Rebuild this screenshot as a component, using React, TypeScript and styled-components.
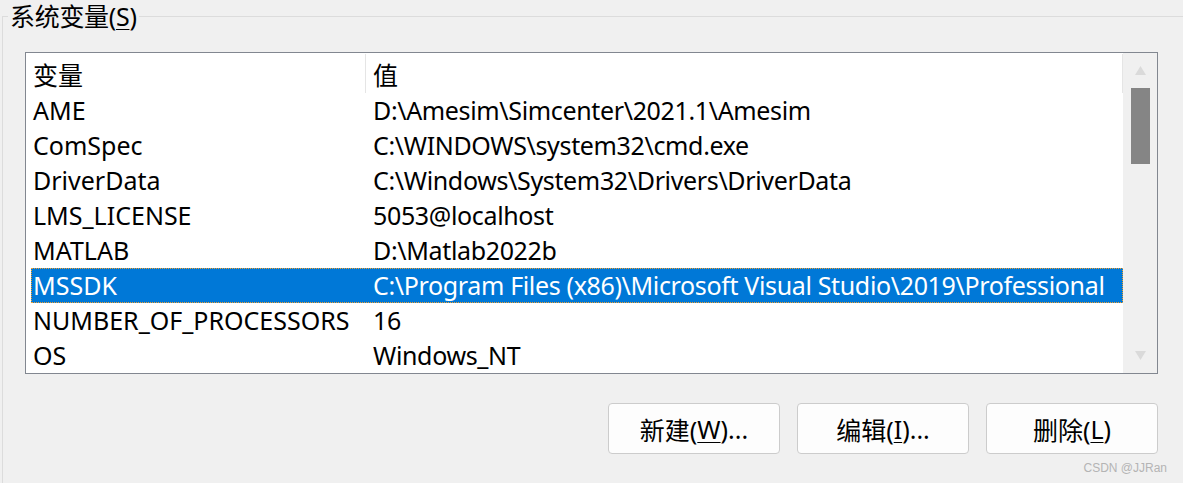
import styled, { createGlobalStyle } from "styled-components";

//global styling
const GlobalStyle = createGlobalStyle`
  html, body {
    margin: 0;
    padding: 0;
    background: #f0f0f0;
  }
  body {
    font-family: "Noto Sans", "Noto Sans CJK SC", sans-serif;
    color: #000;
  }
`;

const FONT = `"Noto Sans", "Noto Sans CJK SC", sans-serif`;

//data
const variables: { name: string; value: string }[] = [
  { name: "AME", value: "D:\\Amesim\\Simcenter\\2021.1\\Amesim" },
  { name: "ComSpec", value: "C:\\WINDOWS\\system32\\cmd.exe" },
  { name: "DriverData", value: "C:\\Windows\\System32\\Drivers\\DriverData" },
  { name: "LMS_LICENSE", value: "5053@localhost" },
  { name: "MATLAB", value: "D:\\Matlab2022b" },
  {
    name: "MSSDK",
    value: "C:\\Program Files (x86)\\Microsoft Visual Studio\\2019\\Professional",
  },
  { name: "NUMBER_OF_PROCESSORS", value: "16" },
  { name: "OS", value: "Windows_NT" },
];

const SELECTED = "MSSDK";

//styled components
const Page = styled.div`
  position: relative;
  width: 1183px;
  height: 483px;
  overflow: hidden;
  background: #f0f0f0;
`;

const Group = styled.fieldset`
  margin: 0 0 0 2px;
  padding: 0 0 0 22px;
  width: 1200px;
  height: 520px;
  box-sizing: border-box;
  border: 1px solid #dcdcdc;
  border-right: none;
  border-bottom: none;
  min-inline-size: 0;
`;

const Legend = styled.legend`
  margin-left: -17px;
  padding: 0 2px 0 2px;
  font-family: ${FONT};
  font-size: 25px;
  line-height: 32px;
  letter-spacing: -0.3px;
  color: #000;
`;

const Key = styled.u`
  text-decoration-thickness: 1px;
  text-underline-offset: 3px;
`;

const ListBox = styled.div`
  margin-top: 20px;
  width: 1133px;
  height: 322px;
  box-sizing: border-box;
  border: 1px solid #828790;
  background: #fff;
  display: flex;
`;

const Content = styled.div`
  flex: 1;
  padding-left: 5px;
  overflow: hidden;
`;

const HeaderRow = styled.div`
  display: flex;
  height: 40px;
  align-items: stretch;
`;

const HeaderCell = styled.div<{ $width?: number; $pad: number }>`
  ${(p) => (p.$width ? `width: ${p.$width}px;` : "flex: 1;")}
  box-sizing: border-box;
  padding-left: ${(p) => p.$pad}px;
  display: flex;
  align-items: center;
  border-right: 1px solid #e5e5e5;
  margin-top: 1px;
  font-family: ${FONT};
  font-size: 25px;
  color: #000;
`;

const Row = styled.div<{ $selected?: boolean }>`
  display: flex;
  height: 35px;
  align-items: center;
  box-sizing: border-box;
  background: ${(p) => (p.$selected ? "#0078d7" : "transparent")};
  color: ${(p) => (p.$selected ? "#fff" : "#000")};
  outline: ${(p) => (p.$selected ? "1px dotted #f0a030" : "none")};
  outline-offset: -1px;
`;

const Cell = styled.div<{ $width?: number; $pad: number; $tight?: boolean }>`
  ${(p) => (p.$width ? `width: ${p.$width}px;` : "flex: 1;")}
  box-sizing: border-box;
  padding-left: ${(p) => p.$pad}px;
  white-space: nowrap;
  overflow: hidden;
  font-family: ${FONT};
  font-size: 25px;
  line-height: 35px;
  letter-spacing: ${(p) => (p.$tight ? "-0.35px" : "0")};
`;

const ScrollBar = styled.div`
  width: 34px;
  background: #f0f0f0;
  display: flex;
  flex-direction: column;
`;

const ArrowButton = styled.div`
  height: 35px;
  display: flex;
  align-items: center;
  justify-content: center;
`;

const Track = styled.div`
  flex: 1;
  display: flex;
  justify-content: center;
`;

const Thumb = styled.div`
  width: 19px;
  height: 76px;
  background: #858585;
`;

const ButtonRow = styled.div`
  width: 1133px;
  margin-top: 29px;
  display: flex;
  justify-content: flex-end;
  gap: 17px;
`;

const Button = styled.button`
  width: 172px;
  height: 51px;
  box-sizing: border-box;
  border: 1px solid #cccccc;
  border-radius: 4px;
  background: #fdfdfd;
  font-family: ${FONT};
  font-size: 25px;
  color: #000;
  padding: 0;
  display: flex;
  align-items: center;
  justify-content: center;
`;

const Watermark = styled.div`
  position: absolute;
  right: 16px;
  bottom: 8px;
  font-family: "Liberation Sans", Arial, sans-serif;
  font-size: 12px;
  color: #b4b4b4;
`;

const COL1 = 335;

const Arrow = ({ up }: { up?: boolean }) => (
  <svg width="11" height="9" viewBox="0 0 11 9">
    <polygon
      points={up ? "0,9 5.5,0 11,9" : "0,0 11,0 5.5,9"}
      fill="#dadada"
    />
  </svg>
);

export default function App() {
  return (
    <Page>
      <GlobalStyle />
      <Group>
        <Legend>
          系统变量(<Key>S</Key>)
        </Legend>
        <ListBox>
          <Content>
            <HeaderRow>
              <HeaderCell $width={COL1} $pad={2}>
                变量
              </HeaderCell>
              <HeaderCell $pad={7}>值</HeaderCell>
            </HeaderRow>
            {variables.map((v) => (
              <Row key={v.name} $selected={v.name === SELECTED}>
                <Cell $width={COL1} $pad={2}>
                  {v.name}
                </Cell>
                <Cell $pad={7} $tight>
                  {v.value}
                </Cell>
              </Row>
            ))}
          </Content>
          <ScrollBar>
            <ArrowButton>
              <Arrow up />
            </ArrowButton>
            <Track>
              <Thumb />
            </Track>
            <ArrowButton>
              <Arrow />
            </ArrowButton>
          </ScrollBar>
        </ListBox>
        <ButtonRow>
          <Button>
            新建(<Key>W</Key>)...
          </Button>
          <Button>
            编辑(<Key>I</Key>)...
          </Button>
          <Button>
            删除(<Key>L</Key>)
          </Button>
        </ButtonRow>
      </Group>
      <Watermark>CSDN @JJRan</Watermark>
    </Page>
  );
}
